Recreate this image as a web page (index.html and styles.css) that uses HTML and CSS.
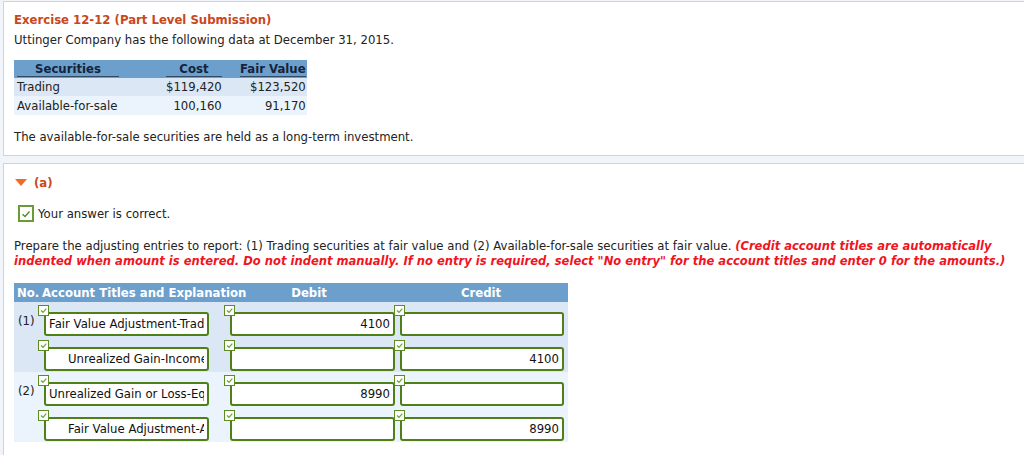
FILE: index.html
```html
<!DOCTYPE html>
<html lang="en">

<head>
  <meta charset="UTF-8">
  <title>Exercise 12-12</title>
  <link rel="stylesheet" href="styles.css">
</head>

<body>
  <div class="panel" id="question">
    <h1 class="title">Exercise 12-12 (Part Level Submission)</h1>
    <p class="intro">Uttinger Company has the following data at December 31, 2015.</p>

    <table class="data">
      <thead>
        <tr>
          <th class="c1"><span>Securities</span></th>
          <th class="c2"><span>Cost</span></th>
          <th class="c3"><span>Fair Value</span></th>
        </tr>
      </thead>
      <tbody>
        <tr class="odd">
          <td class="c1">Trading</td>
          <td class="c2">$119,420</td>
          <td class="c3">$123,520</td>
        </tr>
        <tr class="even">
          <td class="c1">Available-for-sale</td>
          <td class="c2">100,160</td>
          <td class="c3">91,170</td>
        </tr>
      </tbody>
    </table>

    <p class="note">The available-for-sale securities are held as a long-term investment.</p>
  </div>

  <div class="panel" id="partA">
    <div class="part-head">
      <span class="arrow"></span>
      <span class="part-label">(a)</span>
    </div>

    <div class="correct">
      <span class="checkbox">
        <svg width="10" height="10" viewBox="0 0 10 10"><path d="M1.5 5.2 L4 7.5 L8.5 2.5" fill="none" stroke="#4e8a1a" stroke-width="1.3"/></svg>
      </span>
      Your answer is correct.
    </div>

    <p class="instructions">Prepare the adjusting entries to report: (1) Trading securities at fair value and (2) Available-for-sale securities at fair value. <em>(Credit account titles are automatically indented when amount is entered. Do not indent manually. If no entry is required, select "No entry" for the account titles and enter 0 for the amounts.)</em></p>

    <div class="journal">
      <div class="jhead">
        <span class="h-no">No.</span>
        <span class="h-acct">Account Titles and Explanation</span>
        <span class="h-amt">Debit</span>
        <span class="h-amt">Credit</span>
      </div>

      <div class="entry dark">
        <div class="line">
          <span class="num">(1)</span>
          <div class="cell"><span class="ok"></span><input class="acct" type="text" value="Fair Value Adjustment-Trading"></div>
          <div class="cell"><span class="ok"></span><input class="amt" type="text" value="4100"></div>
          <div class="cell"><span class="ok"></span><input class="amt short" type="text" value=""></div>
        </div>
        <div class="line">
          <span class="num"></span>
          <div class="cell"><span class="ok"></span><input class="acct indent" type="text" value="Unrealized Gain-Income"></div>
          <div class="cell"><span class="ok"></span><input class="amt" type="text" value=""></div>
          <div class="cell"><span class="ok"></span><input class="amt short" type="text" value="4100"></div>
        </div>
      </div>

      <div class="entry light">
        <div class="line">
          <span class="num">(2)</span>
          <div class="cell"><span class="ok"></span><input class="acct" type="text" value="Unrealized Gain or Loss-Equity"></div>
          <div class="cell"><span class="ok"></span><input class="amt" type="text" value="8990"></div>
          <div class="cell"><span class="ok"></span><input class="amt short" type="text" value=""></div>
        </div>
        <div class="line">
          <span class="num"></span>
          <div class="cell"><span class="ok"></span><input class="acct indent" type="text" value="Fair Value Adjustment-Available-for-Sale"></div>
          <div class="cell"><span class="ok"></span><input class="amt" type="text" value=""></div>
          <div class="cell"><span class="ok"></span><input class="amt short" type="text" value="8990"></div>
        </div>
      </div>
    </div>
  </div>
</body>

</html>
```

FILE: styles.css
```css
body {
  margin: 0;
  padding-top: 1px;
  background-color: #f1f5f9;
  font-family: "DejaVu Sans", Verdana, sans-serif;
  font-size: 11.7px;
  color: #222;
}

.panel {
  margin-left: 3px;
  background-color: #fff;
  border: 1px solid #cdd4db;
  border-right: none;
  padding: 0 0 0 10px;
}

#question {
  height: 153px;
}

#partA {
  margin-top: 7px;
  height: 300px;
}

.title {
  margin: 11px 0 0;
  font-size: 11.7px;
  font-weight: bold;
  color: #c9471b;
  line-height: 15px;
}

.intro {
  margin: 5px 0 0;
  line-height: 15px;
}

/* securities table */
.data {
  margin-top: 12px;
  border-collapse: collapse;
}

.data th {
  background-color: #6c9fcc;
  height: 18px;
  vertical-align: middle;
}

.data th span {
  display: block;
  border-bottom: 1px solid #2d4a66;
  line-height: 14px;
  color: #14233a;
  text-align: center;
}

.data td {
  height: 18px;
}

.data .c1 {
  width: 102px;
  padding: 0 3px;
  text-align: left;
}

.data .c2 {
  width: 55px;
  padding: 0 3px 0 44px;
  text-align: right;
}

.data .c3 {
  width: 66px;
  padding: 0 1px 0 15px;
  text-align: right;
}

.data .odd td {
  background-color: #dbe7f4;
}

.data .even td {
  background-color: #ebf3fc;
  height: 19px;
}

.note {
  margin: 15px 0 0;
  line-height: 15px;
}

/* part (a) */
.part-head {
  display: flex;
  align-items: center;
  gap: 7px;
  margin-top: 11px;
  height: 15px;
  padding-left: 1px;
}

.arrow {
  width: 0;
  height: 0;
  border-left: 6px solid transparent;
  border-right: 6px solid transparent;
  border-top: 7px solid #f26b22;
}

.part-label {
  font-weight: bold;
  color: #c9471b;
}

.correct {
  display: flex;
  align-items: center;
  gap: 4px;
  margin-top: 15px;
  padding-left: 4px;
  height: 17px;
}

.checkbox {
  display: flex;
  align-items: center;
  justify-content: center;
  width: 12px;
  height: 13px;
  border: 2px solid #6a9c35;
  background-color: #fff;
}

.instructions {
  margin: 17px 0 0;
  line-height: 15px;
}

.instructions em {
  color: #f0141e;
  font-weight: bold;
  font-size: 11.55px;
  line-height: 15px;
}

/* journal entry table */
.journal {
  width: 554px;
  margin-top: 14px;
}

.jhead {
  display: grid;
  grid-template-columns: 28px 182px 170px 174px;
  align-items: center;
  height: 19px;
  background-color: #6c9fcc;
  color: #fff;
  font-weight: bold;
  white-space: nowrap;
}

.h-no {
  padding-left: 3px;
}

.h-amt {
  text-align: center;
}

.entry.dark {
  background-color: #dbe7f4;
}

.entry.light {
  background-color: #ebf3fc;
}

.line {
  display: grid;
  grid-template-columns: 24px 186px 170px 174px;
  height: 35px;
}

.num {
  padding: 12px 0 0 4px;
  line-height: 14px;
}

.cell {
  position: relative;
  padding: 10px 0 0 6px;
}

.ok {
  position: absolute;
  left: 0;
  top: 3px;
  width: 9px;
  height: 9px;
  border: 1px solid #5d8c22;
  background: #fff url("data:image/svg+xml,%3Csvg xmlns='http://www.w3.org/2000/svg' width='9' height='9'%3E%3Cpath d='M2 4.5 L4 6.3 L7.3 2.7' fill='none' stroke='%236aa33a' stroke-width='1.2'/%3E%3C/svg%3E") no-repeat center;
  z-index: 1;
}

.cell input {
  box-sizing: border-box;
  display: block;
  width: 165px;
  height: 24px;
  margin: 0;
  padding: 0 3px;
  border: 2px solid #4f7f17;
  border-radius: 3px;
  background-color: #fff;
  font-family: "DejaVu Sans", Verdana, sans-serif;
  font-size: 11.7px;
  color: #111;
}

.cell input.indent {
  padding-left: 22px;
}

.cell input.amt {
  text-align: right;
}

.cell input.short {
  width: 164px;
}
```
